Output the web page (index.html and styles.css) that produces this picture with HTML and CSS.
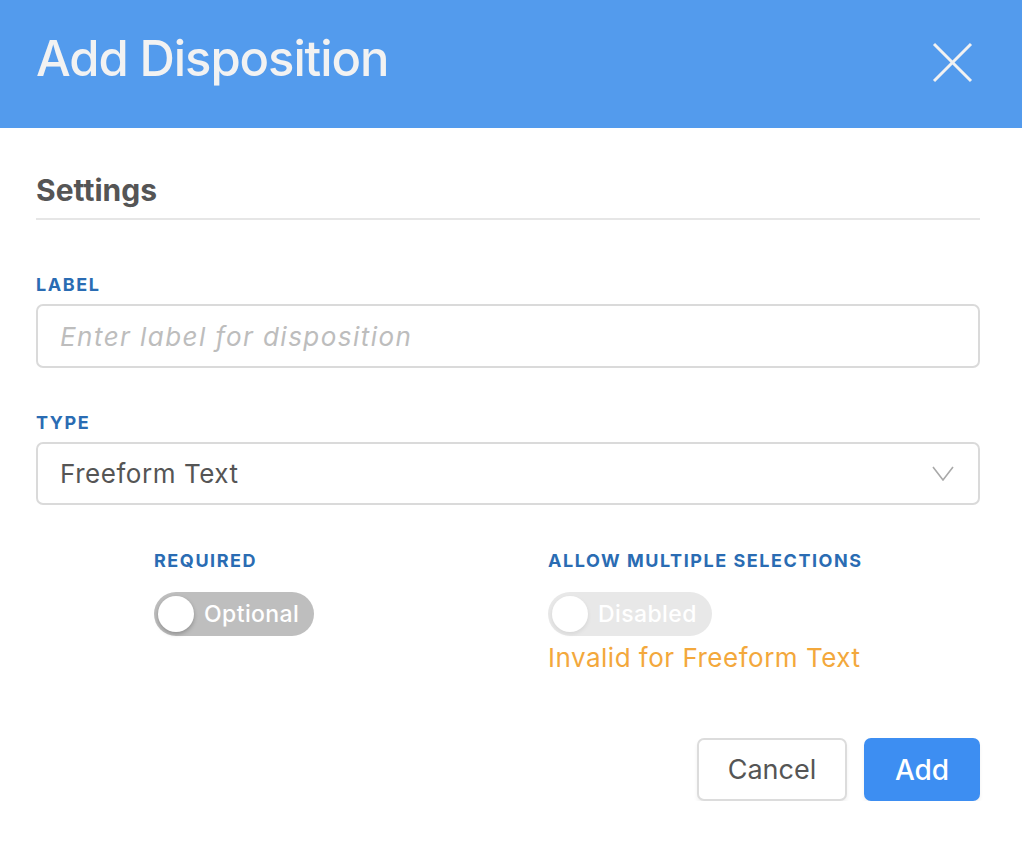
FILE: index.html
```html
<!DOCTYPE html>
<html>
<head>
<meta charset="utf-8">
<link rel="stylesheet" href="styles.css">
</head>
<body>
<div class="modal">
  <header class="modal-header">
    <h1 class="modal-title">Add Disposition</h1>
    <svg class="close-icon" width="41" height="41" viewBox="0 0 41 41">
      <line x1="2" y1="2" x2="39" y2="39" />
      <line x1="39" y1="2" x2="2" y2="39" />
    </svg>
  </header>
  <main class="modal-body">
    <h2 class="section-title">Settings</h2>

    <div class="field field-first">
      <div class="field-label">LABEL</div>
      <div class="text-input"><span class="placeholder">Enter label for disposition</span></div>
    </div>

    <div class="field">
      <div class="field-label">TYPE</div>
      <div class="select">
        <span class="select-value">Freeform Text</span>
        <svg class="chevron" width="22" height="15" viewBox="0 0 22 15">
          <polyline points="1,1 11,14 21,1" />
        </svg>
      </div>
    </div>

    <div class="toggle-row">
      <div class="toggle-col toggle-col-first">
        <div class="field-label">REQUIRED</div>
        <div class="toggle toggle-off">
          <span class="knob"></span>
          <span class="toggle-text">Optional</span>
        </div>
      </div>
      <div class="toggle-col">
        <div class="field-label">ALLOW MULTIPLE SELECTIONS</div>
        <div class="toggle toggle-disabled">
          <span class="knob"></span>
          <span class="toggle-text">Disabled</span>
        </div>
        <div class="warning">Invalid for Freeform Text</div>
      </div>
    </div>

    <div class="actions">
      <button class="btn btn-cancel">Cancel</button>
      <button class="btn btn-primary">Add</button>
    </div>
  </main>
</div>
</body>
</html>
```

FILE: styles.css
```css
html, body {
  margin: 0;
  padding: 0;
  background: #ffffff;
  font-family: "Inter", "Liberation Sans", sans-serif;
}

.modal {
  width: 1022px;
}

.modal-header {
  height: 128px;
  box-sizing: border-box;
  background: #539bed;
  padding: 34px 49px 0 36px;
  display: flex;
  justify-content: space-between;
  align-items: flex-start;
}

.modal-title {
  margin: 0;
  font-size: 49px;
  line-height: 49px;
  font-weight: 500;
  color: #f2f2f2;
  letter-spacing: -1.1px;
}

.close-icon {
  margin-top: 8px;
  display: block;
}

.close-icon line {
  stroke: #f2f2f2;
  stroke-width: 3;
}

.modal-body {
  padding: 44px 42px 0 36px;
}

.section-title {
  margin: 0;
  font-size: 30px;
  line-height: 36px;
  font-weight: 700;
  color: #555555;
  padding-bottom: 10px;
  border-bottom: 2px solid #e6e6e6;
}

.field {
  margin-top: 44px;
}

.field-first {
  margin-top: 54px;
}

.field-label {
  font-size: 18px;
  line-height: 22px;
  font-weight: 700;
  letter-spacing: 1.55px;
  color: #2a6cb3;
  margin-bottom: 8px;
}

.text-input,
.select {
  box-sizing: border-box;
  border: 2px solid #dadada;
  border-radius: 7px;
  display: flex;
  align-items: center;
  padding: 0 22px;
}

.text-input {
  height: 64px;
}

.select {
  height: 63px;
  justify-content: space-between;
  padding-right: 24px;
}

.placeholder {
  font-size: 26px;
  font-style: italic;
  color: #bdbdbd;
  letter-spacing: 1.45px;
}

.select-value {
  font-size: 26px;
  color: #555555;
  letter-spacing: 0.55px;
}

.chevron {
  display: block;
}

.chevron polyline {
  fill: none;
  stroke: #a9a9a9;
  stroke-width: 1.6;
}

.toggle-row {
  display: flex;
  margin-top: 45px;
  padding-left: 118px;
}

.toggle-col-first {
  width: 394px;
}

.toggle-col .field-label {
  margin-bottom: 20px;
}

.toggle {
  display: inline-flex;
  align-items: center;
  height: 44px;
  box-sizing: border-box;
  border-radius: 22px;
  padding: 0 15px 0 4px;
}

.toggle-off {
  background: #bebebe;
}

.toggle-disabled {
  background: #e8e8e8;
}

.knob {
  width: 36px;
  height: 36px;
  border-radius: 50%;
  background: #ffffff;
  box-shadow: 0 2px 4px rgba(0, 0, 0, 0.25);
  margin-right: 10px;
}

.toggle-disabled .knob {
  box-shadow: 0 2px 4px rgba(0, 0, 0, 0.08);
}

.toggle-text {
  font-size: 23px;
  font-weight: 500;
  color: #ffffff;
  letter-spacing: 0.4px;
}

.warning {
  margin-top: 6px;
  font-size: 26px;
  line-height: 32px;
  color: #f3a83c;
  letter-spacing: 0.5px;
}

.actions {
  display: flex;
  justify-content: flex-end;
  gap: 17px;
  margin-top: 64px;
}

.btn {
  height: 63px;
  box-sizing: border-box;
  border-radius: 7px;
  font-family: "Inter", "Liberation Sans", sans-serif;
  font-size: 27px;
  box-shadow: 0 3px 4px rgba(0, 0, 0, 0.06);
  cursor: pointer;
}

.btn-cancel {
  width: 150px;
  background: #ffffff;
  border: 2px solid #dcdcdc;
  color: #555555;
}

.btn-primary {
  width: 116px;
  background: #3d8ef2;
  border: none;
  color: #ffffff;
  font-size: 28px;
  font-weight: 500;
}
```
